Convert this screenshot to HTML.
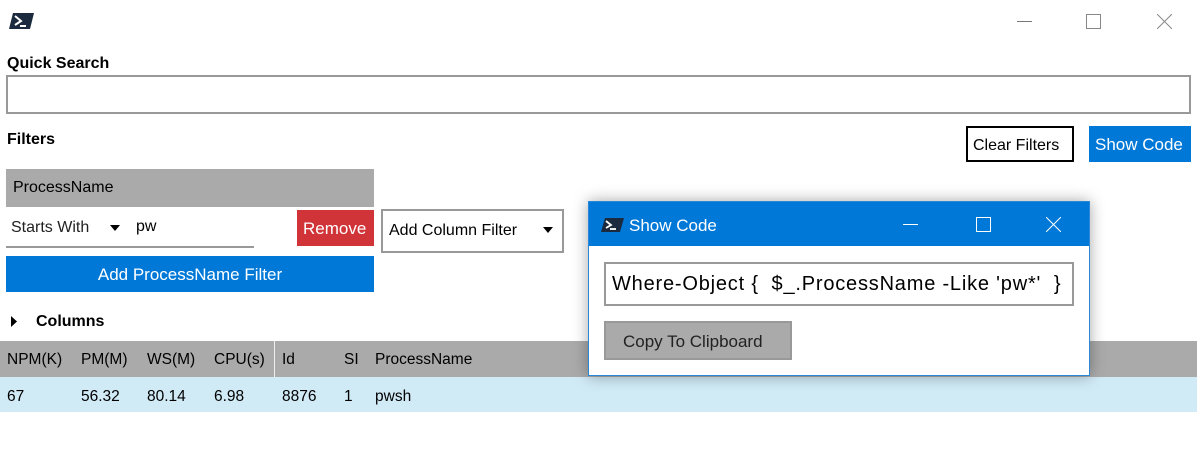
<!DOCTYPE html>
<html><head><style>
*{margin:0;padding:0;box-sizing:border-box}
body{width:1200px;height:455px;background:#fff;font-family:"Segoe UI","Liberation Sans",sans-serif;font-size:16px;color:#000;position:relative;overflow:hidden}
.a{position:absolute}
.t{position:absolute;white-space:nowrap;line-height:1}
.tb{font-size:15.5px}
</style></head><body>
<svg class="a" style="left:9px;top:12px" width="26" height="18" viewBox="0 0 26 18"><polygon points="4,1 25,1 21,17 0,17" fill="#1b2a3f"/><path d="M6 4 L12 9 L6 13" stroke="#fff" stroke-width="2" fill="none"/><path d="M11 14 H17" stroke="#fff" stroke-width="2"/></svg>
<div class="a" style="left:1017px;top:21px;width:15px;height:1px;background:#777"></div>
<div class="a" style="left:1086px;top:14px;width:15px;height:15px;border:1px solid #888"></div>
<svg class="a" style="left:1157px;top:14px" width="15" height="15"><path d="M0 0L15 15M15 0L0 15" stroke="#888" stroke-width="1"/></svg>

<div class="t" style="left:7px;top:56px;font-weight:bold;font-size:16px">Quick Search</div>
<div class="a" style="left:6px;top:75px;width:1185px;height:39px;border:2px solid #999"></div>
<div class="t" style="left:7px;top:132px;font-weight:bold;font-size:16px">Filters</div>
<div class="a" style="left:966px;top:126px;width:108px;height:36px;border:2px solid #000"></div>
<div class="t" style="left:973px;top:138px;font-size:16px">Clear Filters</div>
<div class="a" style="left:1089px;top:126px;width:102px;height:36px;background:#0078d7"></div>
<div class="t" style="left:1095px;top:136px;font-size:17px;color:#fff">Show Code</div>

<div class="a" style="left:6px;top:169px;width:368px;height:38px;background:#aaa"></div>
<div class="t" style="left:13px;top:180px">ProcessName</div>
<div class="t" style="left:11px;top:220px;color:#222">Starts With</div>
<svg class="a" style="left:110px;top:225px" width="10" height="6"><polygon points="0,0 10,0 5,6" fill="#000"/></svg>
<div class="t" style="left:136px;top:219px">pw</div>
<div class="a" style="left:6px;top:246px;width:248px;height:2px;background:#999"></div>
<div class="a" style="left:297px;top:210px;width:77px;height:36px;background:#d13438"></div>
<div class="t" style="left:303px;top:220px;color:#fff;font-size:17px">Remove</div>
<div class="a" style="left:381px;top:209px;width:183px;height:44px;border:2px solid #999"></div>
<div class="t" style="left:389px;top:223px">Add Column Filter</div>
<svg class="a" style="left:543px;top:227px" width="10" height="6"><polygon points="0,0 10,0 5,6" fill="#000"/></svg>
<div class="a" style="left:6px;top:256px;width:368px;height:36px;background:#0078d7"></div>
<div class="t" style="left:0;width:380px;text-align:center;top:266px;color:#fff;font-size:17px">Add ProcessName Filter</div>

<svg class="a" style="left:11px;top:316px" width="6" height="11"><polygon points="0,0 6,5.5 0,11" fill="#000"/></svg>
<div class="t" style="left:36px;top:314px;font-weight:bold">Columns</div>

<div class="a" style="left:0;top:341px;width:1197px;height:36px;background:#aaa"></div>
<div class="a" style="left:274px;top:341px;width:1px;height:36px;background:#eee"></div>
<div class="a" style="left:0;top:377px;width:1197px;height:35px;background:#d0eaf6"></div>
<div class="t tb" style="left:7px;top:352px">NPM(K)</div><div class="t tb" style="left:81px;top:352px">PM(M)</div><div class="t tb" style="left:147px;top:352px">WS(M)</div><div class="t tb" style="left:214px;top:352px">CPU(s)</div><div class="t tb" style="left:282px;top:352px">Id</div><div class="t tb" style="left:344px;top:352px">SI</div><div class="t tb" style="left:375px;top:352px">ProcessName</div>
<div class="t tb" style="left:7px;top:389px">67</div><div class="t tb" style="left:81px;top:389px">56.32</div><div class="t tb" style="left:147px;top:389px">80.14</div><div class="t tb" style="left:214px;top:389px">6.98</div><div class="t tb" style="left:282px;top:389px">8876</div><div class="t tb" style="left:344px;top:389px">1</div><div class="t tb" style="left:375px;top:389px">pwsh</div>

<div class="a" style="left:588px;top:201px;width:502px;height:175px;background:#fff;border:1px solid #2b88d8;box-shadow:0 0 14px rgba(0,0,0,.35)">
<div class="a" style="left:0;top:0;width:500px;height:44px;background:#0078d7"></div>
<svg class="a" style="left:12px;top:16px" width="24" height="14" viewBox="0 0 24 14"><polygon points="4,0 23,0 19,14 0,14" fill="#1b2a3f"/><path d="M5 3 L10 7 L5 10" stroke="#fff" stroke-width="1.8" fill="none"/><path d="M9 11 H15" stroke="#fff" stroke-width="1.8"/></svg>
<div class="t" style="left:40px;top:15px;color:#fff;font-size:17px">Show Code</div>
<div class="a" style="left:314px;top:22px;width:15px;height:1px;background:#fff"></div>
<div class="a" style="left:387px;top:15px;width:15px;height:15px;border:1px solid #fff"></div>
<svg class="a" style="left:457px;top:15px" width="15" height="15"><path d="M0 0L15 15M15 0L0 15" stroke="#fff"/></svg>
<div class="a" style="left:15px;top:60px;width:470px;height:44px;border:2px solid #999"></div>
<div class="t" style="left:23px;top:72px;font-size:20px;letter-spacing:0.8px">Where-Object {&nbsp; $_.ProcessName -Like 'pw*'&nbsp; }</div>
<div class="a" style="left:15px;top:119px;width:188px;height:39px;background:#aaa;border:2px solid #999"></div>
<div class="t" style="left:34px;top:131px;font-size:17px;color:#222">Copy To Clipboard</div>
</div>
</body></html>
